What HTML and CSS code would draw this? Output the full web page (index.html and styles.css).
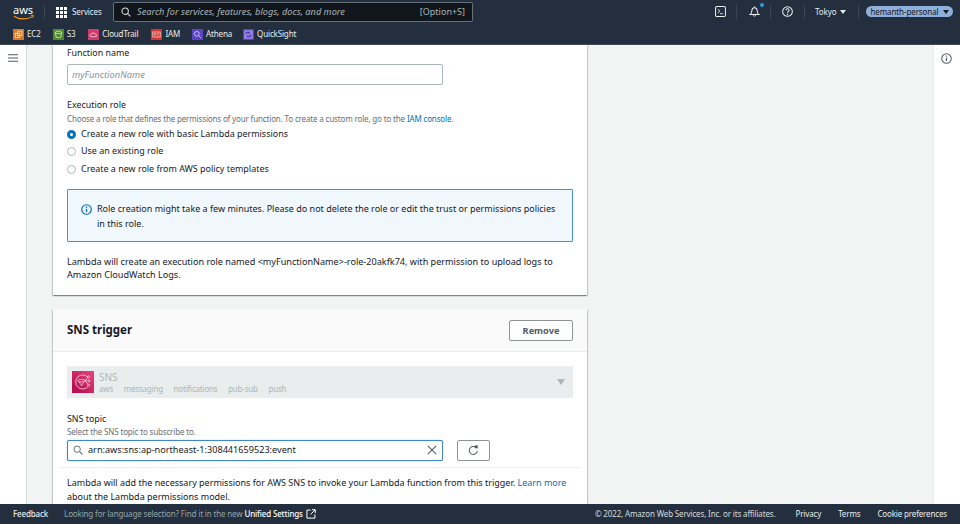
FILE: index.html
```html
<!DOCTYPE html>
<html lang="en">
<head>
<meta charset="utf-8">
<title>Create function - Lambda</title>
<link rel="stylesheet" href="styles.css">
</head>
<body>
<header class="topbar">
  <div class="navrow">
    <svg class="logo" viewBox="0 -4 22 20" width="22" height="20"><text x="0" y="8.2" class="logo-text">aws</text><path d="M1 10.2c5 3.4 13 3.6 18.4.4" fill="none" stroke="#ff9900" stroke-width="1.1"/><path d="M17.8 9.6l2.6-.3-.7 2.5" fill="none" stroke="#ff9900" stroke-width=".9"/></svg>
    <span class="sep sep-logo"></span>
    <svg class="grid" viewBox="0 0 11 11" width="11" height="11"><g fill="#fff"><rect x="0" y="0" width="3" height="3"/><rect x="4" y="0" width="3" height="3"/><rect x="8" y="0" width="3" height="3"/><rect x="0" y="4" width="3" height="3"/><rect x="4" y="4" width="3" height="3"/><rect x="8" y="4" width="3" height="3"/><rect x="0" y="8" width="3" height="3"/><rect x="4" y="8" width="3" height="3"/><rect x="8" y="8" width="3" height="3"/></g></svg>
    <span class="services">Services</span>
    <div class="search">
      <svg viewBox="0 0 12 12" width="10" height="10"><circle cx="5" cy="5" r="3.8" fill="none" stroke="#d5dbdb" stroke-width="1.3"/><path d="M8 8l3.3 3.3" stroke="#d5dbdb" stroke-width="1.4"/></svg>
      <span class="search-text">Search for services, features, blogs, docs, and more</span>
      <span class="search-key">[Option+S]</span>
    </div>
    <div class="tools">
      <svg class="tool-console" viewBox="0 0 12 12" width="11" height="11"><rect x=".6" y=".6" width="10.8" height="10.8" rx="1.4" fill="none" stroke="#eaeded" stroke-width="1.1"/><path d="M3 3.4l2.2 2.2L3 7.8M5.6 8.4h3" fill="none" stroke="#eaeded" stroke-width="1"/></svg>
      <span class="sep sep-a"></span>
      <span class="bell">
        <svg viewBox="0 0 12 12" width="11" height="11"><path d="M1.4 9.2c1.3-1 1.6-2 1.7-4C3.2 3.2 4.4 2 6 2s2.8 1.2 2.9 3.2c.1 2 .4 3 1.7 4z" fill="none" stroke="#eaeded" stroke-width="1.1"/><path d="M6 .5V2M4.7 10.2a1.4 1.4 0 0 0 2.6 0" fill="none" stroke="#eaeded" stroke-width="1"/></svg>
        <span class="dot"></span>
      </span>
      <span class="sep sep-b"></span>
      <svg class="tool-help" viewBox="0 0 12 12" width="11" height="11"><circle cx="6" cy="6" r="5.3" fill="none" stroke="#eaeded" stroke-width="1.1"/><path d="M4.2 4.7C4.2 3.6 5 3 6 3s1.8.7 1.8 1.6C7.8 6 6 6 6 7.4" fill="none" stroke="#eaeded" stroke-width="1.1"/><circle cx="6" cy="9" r=".7" fill="#eaeded"/></svg>
      <span class="sep sep-c"></span>
      <span class="region">Tokyo</span>
      <span class="caret caret-region"></span>
      <span class="sep sep-d"></span>
      <span class="account">hemanth-personal<span class="caret caret-dark"></span></span>
    </div>
  </div>
  <nav class="shortcuts">
    <span class="shortcut s-ec2"><svg class="svc" viewBox="0 0 11 11"><rect width="11" height="11" fill="#d9762a"/><rect x="2.2" y="4.2" width="4.5" height="4.5" fill="none" stroke="#f8e2c8" stroke-width=".8"/><rect x="4.4" y="2.2" width="4.5" height="4.5" fill="none" stroke="#f8e2c8" stroke-width=".8"/></svg>EC2</span>
    <span class="shortcut s-s3"><svg class="svc" viewBox="0 0 11 11"><rect width="11" height="11" fill="#4f8a2c"/><ellipse cx="5.5" cy="3.4" rx="3.2" ry="1.2" fill="none" stroke="#d7ebc4" stroke-width=".8"/><path d="M2.3 3.4l.8 4.6c.6.9 4.2.9 4.8 0l.8-4.6" fill="none" stroke="#d7ebc4" stroke-width=".8"/></svg>S3</span>
    <span class="shortcut s-ct"><svg class="svc" viewBox="0 0 11 11"><rect width="11" height="11" fill="#cf3a6b"/><path d="M2.4 7.6c-1.2-1.2-.2-2.6 1-2.4.4-1.6 3-1.8 3.6-.2 1.4-.2 2.3 1.6 1.3 2.6z" fill="none" stroke="#f6cfdc" stroke-width=".8"/></svg>CloudTrail</span>
    <span class="shortcut s-iam"><svg class="svc" viewBox="0 0 11 11"><rect width="11" height="11" fill="#d5352f"/><rect x="1.8" y="3" width="7.4" height="5" fill="none" stroke="#f6c8c5" stroke-width=".8"/><rect x="3" y="4.4" width="1.6" height="1.8" fill="#f6c8c5"/><path d="M5.6 4.6h2.3M5.6 6.2h2.3" stroke="#f6c8c5" stroke-width=".7"/></svg>IAM</span>
    <span class="shortcut s-ath"><svg class="svc" viewBox="0 0 11 11"><rect width="11" height="11" fill="#5a44c4"/><circle cx="4.8" cy="4.8" r="2.4" fill="none" stroke="#ddd6f8" stroke-width=".8"/><path d="M6.6 6.6l2.2 2.2" stroke="#ddd6f8" stroke-width=".9"/></svg>Athena</span>
    <span class="shortcut s-qs"><svg class="svc" viewBox="0 0 11 11"><rect width="11" height="11" fill="#5a44c4"/><rect x="2" y="2" width="7" height="7" fill="none" stroke="#ddd6f8" stroke-width=".7"/><path d="M2.6 7.6L4.6 5l1.4 1.2 2.4-3" fill="none" stroke="#ddd6f8" stroke-width=".8"/></svg>QuickSight</span>
  </nav>
</header>

<div class="workspace">
  <aside class="rail rail-left">
    <svg viewBox="0 0 10 8" width="10" height="8"><path d="M0 .8h10M0 4h10M0 7.2h10" stroke="#545b64" stroke-width="1.1"/></svg>
  </aside>
  <main class="content">
    <section class="card card-first">
      <div class="field-label">Function name</div>
      <div class="input input-name">myFunctionName</div>
      <div class="field-label label-role">Execution role</div>
      <div class="hint hint-role">Choose a role that defines the permissions of your function. To create a custom role, go to the <a class="link">IAM console</a>.</div>
      <div class="radios">
        <label class="radio"><span class="radio-mark on"></span>Create a new role with basic Lambda permissions</label>
        <label class="radio"><span class="radio-mark"></span>Use an existing role</label>
        <label class="radio"><span class="radio-mark"></span>Create a new role from AWS policy templates</label>
      </div>
      <div class="alert">
        <svg viewBox="0 0 12 12" width="11" height="11"><circle cx="6" cy="6" r="5.2" fill="none" stroke="#0073bb" stroke-width="1.3"/><path d="M6 5.2v3.6" stroke="#0073bb" stroke-width="1.5"/><circle cx="6" cy="3.4" r=".9" fill="#0073bb"/></svg>
        <p>Role creation might take a few minutes. Please do not delete the role or edit the trust or permissions policies in this role.</p>
      </div>
      <p class="note">Lambda will create an execution role named &lt;myFunctionName&gt;-role-20akfk74, with permission to upload logs to Amazon CloudWatch Logs.</p>
    </section>

    <section class="card card-sns">
      <div class="card-head">
        <h2>SNS trigger</h2>
        <button class="btn-remove">Remove</button>
      </div>
      <div class="card-body">
        <div class="select">
          <svg class="sns-icon" viewBox="0 0 22 22"><defs><linearGradient id="g" x1="0" y1="1" x2="1" y2="0"><stop offset="0" stop-color="#b0084d"/><stop offset="1" stop-color="#e7457a"/></linearGradient></defs><rect width="22" height="22" fill="url(#g)"/><path d="M15.8 6.2A7 7 0 1 0 15.8 15.8" fill="none" stroke="#f8dbe5" stroke-width=".8"/><rect x="6" y="8.6" width="7" height="2.2" rx="1" fill="none" stroke="#f8dbe5" stroke-width=".7"/><path d="M7.2 10.8l2.3 4 2.3-4M13 9.7h2.6M13 9.7l3 3.6M13 9.7l3-3.6" fill="none" stroke="#f8dbe5" stroke-width=".7"/><circle cx="16.6" cy="5.8" r="1.1" fill="none" stroke="#f8dbe5" stroke-width=".7"/><circle cx="17" cy="10" r="1.1" fill="none" stroke="#f8dbe5" stroke-width=".7"/><circle cx="16.6" cy="14.2" r="1.1" fill="none" stroke="#f8dbe5" stroke-width=".7"/></svg>
          <div class="select-text">
            <div class="select-name">SNS</div>
            <div class="tags"><span>aws</span><span>messaging</span><span>notifications</span><span>pub-sub</span><span>push</span></div>
          </div>
          <span class="caret caret-select"></span>
        </div>
        <div class="field-label label-topic">SNS topic</div>
        <div class="hint hint-topic">Select the SNS topic to subscribe to.</div>
        <div class="topic-row">
          <div class="input input-topic">
            <svg viewBox="0 0 12 12" width="10" height="10"><circle cx="5" cy="5" r="3.8" fill="none" stroke="#687078" stroke-width="1.2"/><path d="M8 8l3.3 3.3" stroke="#687078" stroke-width="1.3"/></svg>
            <span class="topic-value">arn:aws:sns:ap-northeast-1:308441659523:event</span>
            <svg viewBox="0 0 10 10" width="10" height="10"><path d="M.8.8l8.4 8.4M9.2.8L.8 9.2" stroke="#545b64" stroke-width="1.1"/></svg>
          </div>
          <button class="btn-refresh"><svg viewBox="0 0 12 12" width="11" height="11"><path d="M10.2 6.2A4.4 4.4 0 1 1 8.4 2.4" fill="none" stroke="#545b64" stroke-width="1.1"/><path d="M7.4.4h3.2v3.2H7.4z" fill="#545b64"/></svg></button>
        </div>
        <hr class="divider">
        <p class="note note-sns">Lambda will add the necessary permissions for AWS SNS to invoke your Lambda function from this trigger. <a class="link">Learn more</a> about the Lambda permissions model.</p>
      </div>
    </section>
  </main>
  <aside class="rail rail-right">
    <svg viewBox="0 0 12 12" width="11" height="11"><circle cx="6" cy="6" r="5.2" fill="none" stroke="#545b64" stroke-width="1.1"/><path d="M6 5.2v3.6" stroke="#545b64" stroke-width="1.4"/><circle cx="6" cy="3.4" r=".8" fill="#545b64"/></svg>
  </aside>
</div>

<footer class="footer">
  <span class="feedback">Feedback</span>
  <span class="lang">Looking for language selection? Find it in the new <b>Unified Settings</b></span>
  <svg class="ext" viewBox="0 0 11 11" width="10" height="10"><path d="M5 1.2H1v8.8h8.8V6M6.5.8h3.7v3.7M10 1L5 6" fill="none" stroke="#fff" stroke-width="1.1"/></svg>
  <span class="copy">© 2022, Amazon Web Services, Inc. or its affiliates.</span>
  <span class="foot-link foot-privacy">Privacy</span>
  <span class="foot-link foot-terms">Terms</span>
  <span class="foot-link foot-cookie">Cookie preferences</span>
</footer>
</body>
</html>
```

FILE: styles.css
```css
* { box-sizing: border-box; }
html, body { margin: 0; height: 100%; }
body {
  width: 960px;
  height: 524px;
  overflow: hidden;
  display: flex;
  flex-direction: column;
  font-family: "Noto Sans", "Liberation Sans", sans-serif;
  font-size: 9.1px;
  line-height: 14.67px;
  color: #16191f;
  background: #f2f3f3;
}
p { margin: 0; }

/* header */
.topbar { height: 45px; flex: none; background: #232f3e; color: #eaeded; }
.navrow { height: 24px; display: flex; align-items: center; padding-left: 13px; }
.logo { flex: none; margin-top: -1px; }
.logo-text { font: 400 11px "Noto Sans", sans-serif; fill: #fff; }
.sep { flex: none; width: 1px; height: 14px; background: #3b4653; }
.sep-logo { margin-left: 9px; }
.grid { margin-left: 11px; flex: none; }
.services { margin-left: 5px; width: 41px; font-size: 8px; letter-spacing: -.1px; color: #eaeded; }
.search {
  width: 360px; height: 20px; display: flex; align-items: center;
  padding: 0 7px; background: #11151c; border: 1px solid #687078; border-radius: 2px;
}
.search-text { margin-left: 6px; flex: 1; font-style: italic; font-size: 9.2px; color: #aab7b8; white-space: nowrap; }
.search-key { font-size: 9px; color: #aab7b8; }
.tools { display: flex; align-items: center; margin-left: 242px; }
.bell { position: relative; display: flex; margin-left: 12px; }
.dot { position: absolute; top: -3px; right: -4px; width: 4px; height: 4px; border-radius: 50%; background: #2f9fd8; }
.tool-console, .tool-help { flex: none; }
.sep-a { margin-left: 10px; }
.sep-b { margin-left: 10px; }
.tool-help { margin-left: 11px; }
.sep-c { margin-left: 11px; }
.region { margin-left: 10px; font-size: 8px; letter-spacing: -.1px; color: #eaeded; }
.caret { display: inline-block; flex: none; width: 0; height: 0; border-left: 3.5px solid transparent; border-right: 3.5px solid transparent; border-top: 4.5px solid #eaeded; }
.caret-region { margin-left: 4px; }
.sep-d { margin-left: 12px; }
.account {
  flex: none; margin-left: 7px; width: 87px; height: 11px; display: flex; align-items: center; justify-content: space-between;
  padding: 0 4px; background: #8fb0dc; color: #16191f; font-size: 8px; letter-spacing: -.1px; border-radius: 6px; white-space: nowrap;
}
.caret-dark { border-top-color: #16191f; }
.shortcuts { height: 21px; display: flex; align-items: center; padding: 1px 0 0 13px; border-bottom: 1px solid #3f4a57; }
.shortcut { display: flex; align-items: center; gap: 3px; font-size: 8px; letter-spacing: -.15px; color: #eaeded; white-space: nowrap; }
.svc { width: 11px; height: 11px; flex: none; }
.s-s3 { margin-left: 12px; }
.s-ct { margin-left: 13px; }
.s-iam { margin-left: 13px; }
.s-ath { margin-left: 12px; }
.s-qs { margin-left: 11px; }

/* layout */
.workspace { flex: 1; min-height: 0; display: flex; overflow: hidden; }
.rail { flex: none; width: 27px; background: #fff; display: flex; justify-content: center; }
.rail-left { border-right: 1px solid #d5dbdb; padding-top: 9px; }
.rail-right { border-left: 1px solid #eaeded; padding: 8px 1px 0 0; }
.content { flex: 1; min-width: 0; padding: 0 346px 0 26px; overflow: hidden; }
.card { background: #fff; box-shadow: 0 1px 1px 0 rgba(0,28,36,.3), 1px 1px 1px 0 rgba(0,28,36,.15), -1px 1px 1px 0 rgba(0,28,36,.15); }

.card-first { height: 250px; padding: 1px 14px 0; }
.field-label { font-size: 8.9px; line-height: 14.67px; color: #16191f; }
.input { height: 21px; width: 376px; border: 1px solid #aab7b8; border-radius: 2px; background: #fff; }
.input-name { margin-top: 3px; padding: 3px 4px; font-size: 9.33px; font-style: italic; color: #879596; }
.label-role { margin-top: 13px; }
.hint { font-size: 8px; letter-spacing: -.15px; line-height: 11px; color: #687078; }
.hint-role { margin-top: 1px; }
.link { color: #0073bb; }
.radios { margin-top: 1px; display: flex; flex-direction: column; font-size: 8.95px; }
.radio { height: 17.5px; display: flex; align-items: center; gap: 5px; }
.radio-mark { width: 9px; height: 9px; border-radius: 50%; border: 1px solid #aab7b8; background: #fff; flex: none; }
.radio-mark.on { border: 3px solid #0073bb; }
.alert {
  margin-top: 11px; height: 53px; padding: 12px 9px 12px 13px; display: flex; gap: 5px; font-size: 9px;
  background: #f1f8fd; border: 1px solid #4a90c4; border-radius: 1px;
}
.alert svg { flex: none; margin-top: 2px; }
.note { margin-top: 13px; line-height: 13.6px; }

.card-sns { margin-top: 14px; }
.card-head {
  height: 43px; padding: 0 14px; display: flex; align-items: center; justify-content: space-between;
  background: #fafafa; border-bottom: 1px solid #eaeded;
}
h2 { margin: 0; font-size: 11.5px; font-weight: 700; color: #16191f; }
.btn-remove {
  width: 64px; height: 21px; padding: 0; font: 700 9.2px "Noto Sans", sans-serif; color: #545b64;
  background: #fff; border: 1px solid #8d9399; border-radius: 2px;
}
.card-body { padding: 14px 14px 0; }
.select { height: 32px; display: flex; align-items: center; padding: 0 6px 0 5px; background: #eaeded; border-radius: 1px; }
.sns-icon { width: 22px; height: 22px; flex: none; }
.select-text { flex: 1; margin: 1px 0 0 5px; color: #aab7b8; }
.select-name { font-size: 10px; line-height: 12px; }
.tags { display: flex; gap: 10.7px; font-size: 8px; letter-spacing: -.2px; line-height: 12px; }
.caret-select { border-left-width: 4px; border-right-width: 4px; border-top: 6px solid #aab7b8; margin-right: 2px; }
.label-topic { margin-top: 14px; }
.hint-topic { margin-top: -1px; }
.topic-row { margin-top: 3px; display: flex; gap: 14px; }
.input-topic {
  display: flex; align-items: center; padding: 0 5px; gap: 5px;
  border: 1px solid #3f87c5; box-shadow: 0 0 1px #3f87c5;
}
.topic-value { flex: 1; font-size: 9.15px; }
.btn-refresh {
  width: 33px; height: 21px; padding: 0; display: flex; align-items: center; justify-content: center;
  background: #fff; border: 1px solid #8d9399; border-radius: 2px;
}
.divider { margin: 6px -7px 0; height: 1px; border: 0; background: #eaeded; }
.note-sns { margin-top: 8px; font-size: 9px; line-height: 14.67px; }

/* footer */
.footer { height: 20px; flex: none; display: flex; align-items: center; background: #232f3e; color: #d5dbdb; font-size: 8px; letter-spacing: -.15px; white-space: nowrap; }
.feedback { margin-left: 13px; color: #eaeded; font-weight: 500; }
.lang { margin-left: 16px; color: #95a5a6; }
.lang b { font-weight: 500; color: #fff; }
.ext { margin-left: 3px; flex: none; }
.copy { margin-left: auto; }
.foot-link { color: #eaeded; }
.foot-privacy { margin-left: 20px; }
.foot-terms { margin-left: 17px; }
.foot-cookie { margin-left: 17px; margin-right: 13px; }
```
